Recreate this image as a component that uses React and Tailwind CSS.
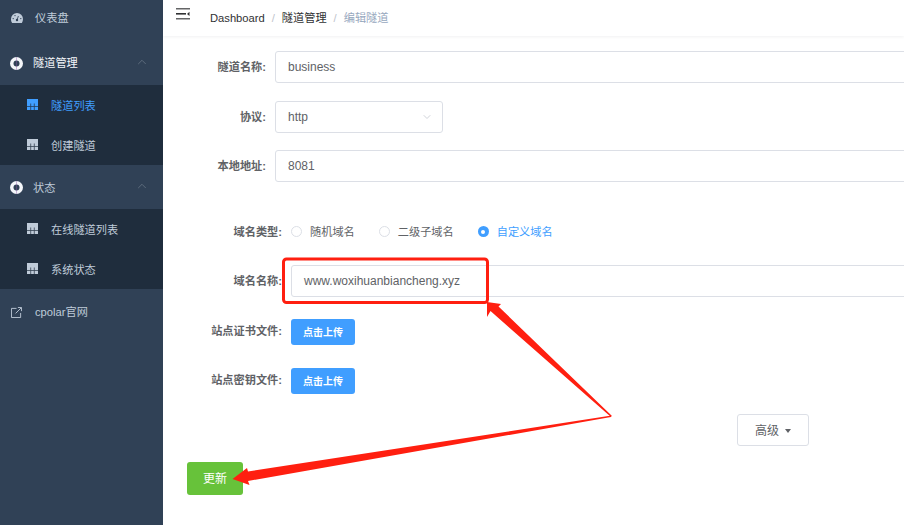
import React from "react";
import { ChevronUp, ChevronDown } from "lucide-react";

function Gauge({ className }) {
  return (
    <svg viewBox="0 0 12 10" className={className} fill="currentColor">
      <path d="M6 0a6 6 0 0 1 6 6c0 1.4-.4 2.8-1.1 4H1.1A6.6 6.6 0 0 1 0 6a6 6 0 0 1 6-6Z" />
      <circle cx="6" cy="7" r="1.2" fill="#304156" />
      <path d="M6 7 7.4 3" stroke="#304156" strokeWidth=".8" />
      <circle cx="2.2" cy="5.6" r=".7" fill="#304156" />
      <circle cx="9.8" cy="5.6" r=".7" fill="#304156" />
      <circle cx="4" cy="2.6" r=".7" fill="#304156" />
    </svg>
  );
}

function Target({ className }) {
  return (
    <svg viewBox="0 0 13 13" className={className}>
      <circle cx="6.5" cy="6.5" r="6.5" fill="#f4f6fa" />
      <circle cx="6.5" cy="6.5" r="3" fill="#304156" />
      <path d="M6.5 0v13" stroke="#8a5aa8" strokeWidth=".6" opacity=".7" />
    </svg>
  );
}

function Grid({ className }) {
  return (
    <svg viewBox="0 0 11 11" className={className} fill="currentColor">
      <rect width="11" height="11" />
      <path d="M0 7.5h11M3.7 4.5V11M7.3 4.5V11" stroke="#1f2d3d" strokeWidth=".8" opacity=".85" />
    </svg>
  );
}

function ExternalIcon({ className }) {
  return (
    <svg viewBox="0 0 12 12" className={className} fill="none" stroke="currentColor" strokeWidth="1">
      <path d="M6 1.5H.5v10h10V6.5" />
      <path d="M5 7 11 1M7.5 .5h4v4" />
    </svg>
  );
}

function SideTop({ icon, label, white, chevron, className = "", textClass = "" }) {
  return (
    <div className={`flex items-center bg-[#304156] ${className}`}>
      {icon}
      <span className={`${textClass} ${white ? "text-[#f4f6fa]" : "text-[#bfcbd9]"}`}>{label}</span>
      {chevron && <ChevronUp className="ml-auto mr-[14px] -mt-[2px] h-[14px] w-[14px] text-[#6f7c8b]" strokeWidth={1.2} />}
    </div>
  );
}

function SubItem({ label, active }) {
  return (
    <div className={`flex h-10 items-center pl-[27px] ${active ? "text-[#409eff]" : "text-[#bfcbd9]"}`}>
      <Grid className="mr-[13px] -mt-[1px] h-[11px] w-[11px]" />
      <span className="pt-[2px]">{label}</span>
    </div>
  );
}

function Row({ label, width, className = "", children }) {
  return (
    <div className={`flex items-center ${className}`}>
      <label style={{ width }} className="shrink-0 pr-[9px] text-right font-bold text-[#606266]">
        {label}:
      </label>
      {children}
    </div>
  );
}

function Input({ value, pad = "pl-3" }) {
  return (
    <div className={`-mr-4 flex h-8 flex-1 items-center rounded-[3px] border border-[#dcdfe6] ${pad} text-[12px] text-[#606266]`}>
      {value}
    </div>
  );
}

function Radio({ label, checked }) {
  return (
    <div className="flex items-center">
      {checked ? (
        <span className="flex h-[11px] w-[11px] items-center justify-center rounded-full bg-[#409eff]">
          <span className="h-[4px] w-[4px] rounded-full bg-white" />
        </span>
      ) : (
        <span className="h-[11px] w-[11px] rounded-full border border-[#dcdfe6]" />
      )}
      <span className={`ml-2 ${checked ? "text-[#409eff]" : "text-[#606266]"}`}>{label}</span>
    </div>
  );
}

function Upload() {
  return (
    <button type="button" className="flex h-[25.5px] w-16 items-center justify-center rounded-[3px] bg-[#409eff] pt-[1px] text-[10px] font-bold text-white">
      点击上传
    </button>
  );
}

export default function App() {
  return (
    <div className="relative flex h-[525px] w-[904px] overflow-hidden bg-white font-['Liberation_Sans','Noto_Sans_CJK_SC',sans-serif] text-[11.2px]">
      <aside className="flex h-full w-[163px] shrink-0 flex-col bg-[#304156]">
        <SideTop
          className="mb-[5px] h-9 pl-[11px]"
          icon={<Gauge className="mr-[12px] h-[10px] w-[12px] text-[#bfcbd9]" />}
          label="仪表盘"
        />
        <SideTop
          className="h-11 pl-[10px]"
          icon={<Target className="mr-[10px] h-[13px] w-[13px]" />}
          label="隧道管理"
          white
          chevron
        />
        <div className="bg-[#1f2d3d]">
          <SubItem label="隧道列表" active />
          <SubItem label="创建隧道" />
        </div>
        <SideTop
          className="h-11 pl-[10px]"
          icon={<Target className="mr-[10px] h-[13px] w-[13px]" />}
          label="状态"
          textClass="pt-[2px]"
          chevron
        />
        <div className="bg-[#1f2d3d]">
          <SubItem label="在线隧道列表" />
          <SubItem label="系统状态" />
        </div>
        <SideTop
          className="h-[46px] pl-[11px]"
          icon={<ExternalIcon className="mr-[13px] h-[11px] w-[11px] text-[#bfcbd9]" />}
          label="cpolar官网"
        />
      </aside>

      <main className="min-w-0 flex-1">
        <header className="flex h-9 items-center pl-[13px] shadow-[0_1px_3px_rgba(0,21,41,0.06)]">
          <svg viewBox="0 0 14 12" className="-mt-2 h-3 w-[14px] text-[#303133]" fill="currentColor">
            <rect width="14" height="1.5" opacity=".75" />
            <rect y="5" width="10" height="1.6" />
            <rect y="10" width="14" height="1.5" opacity=".75" />
            <path d="M13.5 3.8v4.2L11 5.9Z" />
          </svg>
          <nav className="ml-[20px] flex items-center">
            <span className="text-[#303133]">Dashboard</span>
            <span className="mx-[7px] text-[#c0c4cc]">/</span>
            <span className="text-[#303133]">隧道管理</span>
            <span className="mx-[7px] text-[#c0c4cc]">/</span>
            <span className="text-[#97a8be]">编辑隧道</span>
          </nav>
        </header>

        <form className="pl-6 pt-[15px]">
          <Row label="隧道名称" width={88} className="mb-[18px]">
            <Input value="business" />
          </Row>
          <Row label="协议" width={88} className="mb-[17px]">
            <div className="flex h-8 w-[168px] items-center justify-between rounded-[3px] border border-[#dcdfe6] px-3 text-[12px] text-[#606266]">
              http
              <ChevronDown className="-mr-[3px] h-3 w-3 text-[#c0c4cc]" strokeWidth={1.5} />
            </div>
          </Row>
          <Row label="本地地址" width={88} className="mb-[34px]">
            <Input value="8081" />
          </Row>

          <Row label="域名类型" width={104} className="mb-[17px] h-8">
            <div className="flex items-center gap-6">
              <Radio label="随机域名" />
              <Radio label="二级子域名" />
              <Radio label="自定义域名" checked />
            </div>
          </Row>
          <Row label="域名名称" width={104} className="mb-[22px]">
            <Input value="www.woxihuanbiancheng.xyz" />
          </Row>
          <Row label="站点证书文件" width={104} className="mb-[23.5px]">
            <Upload />
          </Row>
          <Row label="站点密钥文件" width={104} className="mb-5">
            <Upload />
          </Row>

          <div className="mb-4 flex justify-end pr-[95px]">
            <button type="button" className="flex h-8 w-[72px] items-center justify-center gap-[6px] rounded-[3px] border border-[#dcdfe6] pt-[2px] text-[12px] text-[#606266]">
              高级
              <span className="mt-[1px] h-0 w-0 border-x-[3.5px] border-t-[4px] border-x-transparent border-t-[#606266]" />
            </button>
          </div>
          <button type="button" className="flex h-[33px] w-14 items-center justify-center rounded-[3px] bg-[#67c23a] pt-[2px] text-[12px] text-white">
            更新
          </button>
        </form>
      </main>

      <svg className="pointer-events-none absolute inset-0 h-[525px] w-[904px]" viewBox="0 0 904 525">
        <rect x="283.5" y="259" width="204" height="43.5" rx="3" fill="none" stroke="#ff1f10" strokeWidth="3" />
        <polygon fill="#ff1f10" points="487,302 501,304 498.5,306.5 611.5,415.5 611,417 490.5,311 487,317" />
        <polygon fill="#ff1f10" points="232.5,479 247,468 248,471.5 611.5,415.5 611,417 248,481 249.5,485" />
      </svg>
    </div>
  );
}
